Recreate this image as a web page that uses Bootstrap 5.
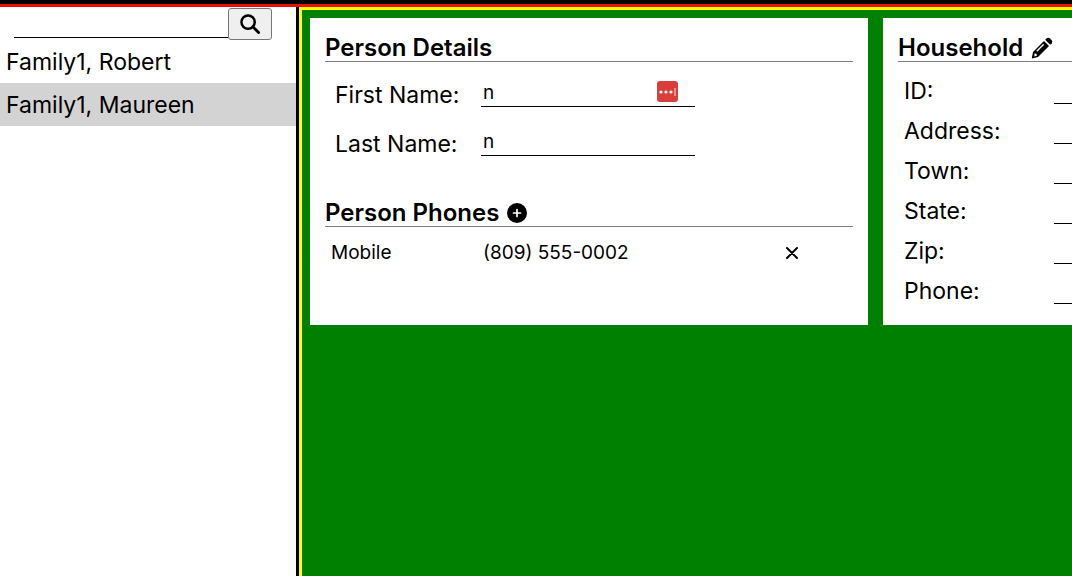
<!DOCTYPE html>
<html lang="en">
<head>
<meta charset="utf-8">
<meta name="viewport" content="width=device-width, initial-scale=1">
<title>Person Details</title>
<link href="https://cdn.jsdelivr.net/npm/bootstrap@5.3.0/dist/css/bootstrap.min.css" rel="stylesheet">
<style>
body { font-family: Inter, "Liberation Sans", sans-serif; font-size: 23px; line-height: 28px; color: #000; background: #fff; }
.topbar { height: 7px; background: #000; border-bottom: 3px solid #e60f0a; }
.people { width: 299px; border-right: 3px solid #000; }
.search { padding: 1px 24px 0 14px; }
.line-input { border: 0; border-bottom: 1px solid #000; border-radius: 0; background: transparent; outline: 0; color: #000; min-width: 0; }
.search .line-input { height: 30px; }
.search-btn { width: 44px; height: 32px; border: 1px solid #767676; border-radius: 3px; background: #efefef; }
.person { color: #000; padding: 8px 6px 7px; }
.person.active { background: #d3d3d3; }
.workspace { background: #008000; border: solid #ff0; border-width: 3px 0 0 3px; padding: 8px; gap: 15px; min-width: 0; }
.panel { background: #fff; padding: 15px; }
.panel-person { width: 558px; padding-bottom: 53px; }
.panel-home { width: 420px; padding-bottom: 14px; }
.panel-title { font-size: 24px; line-height: 26px; padding-top: 2px; font-weight: 600; border-bottom: 1px solid #808080; gap: 8px; }
.fields { padding: 8px 10px 0; margin-bottom: 30px; }
.field { height: 49px; }
.field label { width: 146px; }
.entry { width: 214px; margin-bottom: 4px; }
.entry .line-input { height: 29px; padding: 1px 2px 0; font-size: 19px; }
.fill-btn { right: 17px; top: 3px; width: 21px; height: 21px; }
.phones { font-size: 19px; margin-top: 7px; }
.phones td { height: 38px; padding: 0 6px; }
.kind-col { width: 152px; }
.remove-col { width: 74px; }
.home-fields { padding: 9px 6px 0; }
.home-field { height: 40px; }
.home-field label { width: 150px; }
.home-field .line-input { height: 26px; font-size: 19px; }
</style>
<script src="https://cdn.jsdelivr.net/npm/bootstrap@5.3.0/dist/js/bootstrap.bundle.min.js"></script>
</head>
<body class="d-flex flex-column vh-100 overflow-hidden">
<header class="topbar flex-shrink-0"></header>
<div class="d-flex flex-grow-1">
  <aside class="people flex-shrink-0">
    <form class="search d-flex">
      <input class="line-input flex-fill" type="text" aria-label="Search people">
      <button class="search-btn p-0 d-flex flex-shrink-0 align-items-center justify-content-center" type="button" aria-label="Search">
        <svg width="20" height="20" viewBox="0 0 21 21" fill="none" stroke="#000"><circle cx="8.5" cy="8.5" r="7" stroke-width="2.6"/><path d="M13.5 13.5l6 6" stroke-width="3" stroke-linecap="round"/></svg>
      </button>
    </form>
    <nav class="d-flex flex-column">
      <a class="person text-decoration-none" href="#">Family1, Robert</a>
      <a class="person active text-decoration-none" href="#" aria-current="true">Family1, Maureen</a>
    </nav>
  </aside>
  <main class="workspace d-flex flex-grow-1 align-items-start overflow-hidden">
    <section class="panel panel-person flex-shrink-0">
      <h2 class="panel-title m-0">Person Details</h2>
      <div class="fields">
        <div class="field d-flex align-items-center">
          <label for="first">First Name:</label>
          <div class="entry position-relative d-flex">
            <input class="line-input w-100" id="first" type="text" value="n">
            <button class="fill-btn position-absolute border-0 p-0 bg-transparent d-flex" type="button" aria-label="Fill from password manager">
              <svg width="21" height="21" viewBox="0 0 21 21"><rect width="21" height="21" rx="3" fill="#d93e3b"/><g fill="#fff"><circle cx="4" cy="11" r="1.6"/><circle cx="9" cy="11" r="1.6"/><circle cx="14" cy="11" r="1.6"/><path d="M17.5 7h1v8h-1z" opacity=".85"/></g></svg>
            </button>
          </div>
        </div>
        <div class="field d-flex align-items-center">
          <label for="last">Last Name:</label>
          <div class="entry d-flex"><input class="line-input w-100" id="last" type="text" value="n"></div>
        </div>
      </div>
      <h2 class="panel-title m-0 d-flex align-items-center">Person Phones
        <button class="border-0 p-0 bg-transparent d-flex" type="button" aria-label="Add phone">
          <svg width="20" height="20" viewBox="0 0 20 20"><circle cx="10" cy="10" r="10"/><path d="M10 6.500v7M6.500 10h7" stroke="#fff" stroke-width="1.7" stroke-linecap="round"/></svg>
        </button>
      </h2>
      <table class="phones w-100">
        <tbody><tr>
          <td class="kind-col">Mobile</td>
          <td>(809) 555-0002</td>
          <td class="remove-col"><button class="border-0 p-0 bg-transparent d-flex" type="button" aria-label="Remove phone"><svg width="14" height="14" viewBox="0 0 14 14"><path d="M2 2l10 10M12 2L2 12" stroke="#000" stroke-width="2" stroke-linecap="round"/></svg></button></td>
        </tr></tbody>
      </table>
    </section>
    <section class="panel panel-home flex-shrink-0">
      <h2 class="panel-title m-0 d-flex align-items-center">Household
        <button class="border-0 p-0 bg-transparent d-flex" type="button" aria-label="Edit household">
          <svg width="22" height="22" viewBox="0 0 22 22"><path d="M13 4l5 5L7 20l-6.2 1.5L2 15z"/><path d="M14.2 2.8l1.6-1.6q1.6-1 3.2.2l1.6 1.6q1.4 1.6.2 3.2l-1.6 1.6z"/><path d="M5.8 14.2L12.7 7.300" stroke="#fff" stroke-width="1.3"/><path d="M3.500 16.500l2 .3.3 2-2.500.6z" fill="#fff"/></svg>
        </button>
      </h2>
      <div class="home-fields">
        <div class="home-field d-flex align-items-center"><label class="flex-shrink-0" for="hid">ID:</label><input class="line-input flex-fill" id="hid" type="text"></div>
        <div class="home-field d-flex align-items-center"><label class="flex-shrink-0" for="addr">Address:</label><input class="line-input flex-fill" id="addr" type="text"></div>
        <div class="home-field d-flex align-items-center"><label class="flex-shrink-0" for="town">Town:</label><input class="line-input flex-fill" id="town" type="text"></div>
        <div class="home-field d-flex align-items-center"><label class="flex-shrink-0" for="state">State:</label><input class="line-input flex-fill" id="state" type="text"></div>
        <div class="home-field d-flex align-items-center"><label class="flex-shrink-0" for="zip">Zip:</label><input class="line-input flex-fill" id="zip" type="text"></div>
        <div class="home-field d-flex align-items-center"><label class="flex-shrink-0" for="phone">Phone:</label><input class="line-input flex-fill" id="phone" type="text"></div>
      </div>
    </section>
  </main>
</div>
</body>
</html>
